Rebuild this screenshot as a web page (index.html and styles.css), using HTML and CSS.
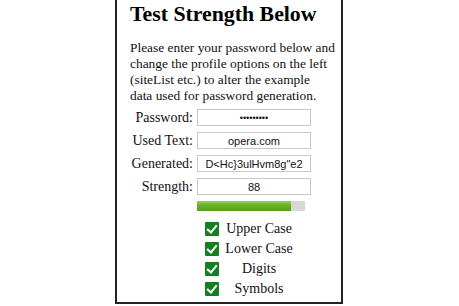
FILE: index.html
```html
<!DOCTYPE html>
<html lang="en">
<head>
	<meta charset="UTF-8">
	<title>Test Strength</title>
	<link rel="stylesheet" href="styles.css">
</head>
<body>
	<div class="panel">
		<h2>Test Strength Below</h2>
		<p class="intro">Please enter your password below and<br>change the profile options on the left<br>(siteList etc.) to alter the example<br>data used for password generation.</p>
		<div class="form">
			<label>Password:</label>
			<input type="password" class="secret" value="123456789">
			<label>Used Text:</label>
			<input type="text" value="opera.com">
			<label>Generated:</label>
			<input type="text" value="D&lt;Hc}3ulHvm8g&quot;e2">
			<label>Strength:</label>
			<input type="text" value="88">
			<span></span>
			<div class="meter"><div class="fill" style="width: 87%"></div></div>
		</div>
		<ul class="checks">
			<li><span class="box"></span><span class="name">Upper Case</span></li>
			<li><span class="box"></span><span class="name">Lower Case</span></li>
			<li><span class="box"></span><span class="name">Digits</span></li>
			<li><span class="box"></span><span class="name">Symbols</span></li>
		</ul>
	</div>
</body>
</html>
```

FILE: styles.css
```css
html, body {
	margin: 0;
	padding: 0;
	background: #fff;
	font-family: "Liberation Serif", Georgia, serif;
	color: #111;
}
.panel {
	width: 228px;
	height: 304px;
	box-sizing: border-box;
	margin-left: 115px;
	border: 2px solid #222;
	border-top: none;
	padding: 0 0 0 13px;
	overflow: hidden;
}
h2 {
	margin: 0;
	padding-top: 3px;
	font-size: 21.8px;
	line-height: 22px;
	font-weight: bold;
	color: #000;
}
.intro {
	margin: 15px 0 0;
	font-size: 13.4px;
	line-height: 16px;
	white-space: nowrap;
}
.form {
	display: grid;
	grid-template-columns: 63px 114px;
	column-gap: 4px;
	row-gap: 6px;
	margin-top: 5px;
	align-items: center;
}
.form label {
	text-align: right;
	font-size: 14px;
}
.form input {
	box-sizing: border-box;
	width: 114px;
	height: 17px;
	margin: 0;
	padding: 0;
	border: 1px solid #c8c8c8;
	font-family: "Liberation Sans", Arial, sans-serif;
	font-size: 11px;
	text-align: center;
	color: #111;
}
.form input.secret {
	font-size: 9px;
}
.meter {
	width: 108px;
	height: 10px;
	background: #d8d8d8;
}
.fill {
	height: 100%;
	background: linear-gradient(#9ed060, #6bb02a 40%, #5a9e1e);
}
.checks {
	list-style: none;
	margin: 8px 0 0 75px;
	padding: 0;
}
.checks li {
	display: flex;
	align-items: center;
	height: 20px;
	font-size: 14px;
}
.box {
	width: 14px;
	height: 14px;
	background: #13801f;
	border-radius: 1px;
	position: relative;
	flex: none;
}
.box::after {
	content: "";
	position: absolute;
	left: 4px;
	top: 1px;
	width: 4px;
	height: 8px;
	border: solid #fff;
	border-width: 0 2.5px 2.5px 0;
	transform: rotate(40deg);
}
.name {
	width: 70px;
	margin-left: 5px;
	text-align: center;
}
```
